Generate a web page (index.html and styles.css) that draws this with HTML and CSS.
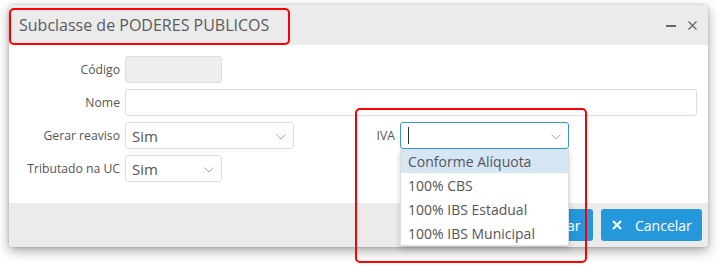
FILE: index.html
```html
<!DOCTYPE html>
<html lang="pt">
<head>
<meta charset="utf-8">
<link rel="stylesheet" href="styles.css">
</head>
<body>
<div class="dialog">
  <div class="header">
    <span class="title">Subclasse de PODERES PUBLICOS</span>
    <div class="tools">
      <span class="min"></span>
      <svg class="close" width="9" height="9" viewBox="0 0 9 9"><path d="M0.5 0.5 L8.5 8.5 M8.5 0.5 L0.5 8.5" stroke="#666" stroke-width="1.3" fill="none"/></svg>
    </div>
  </div>
  <div class="body">
    <div class="row">
      <label class="lbl">Código</label>
      <div class="input disabled w97"></div>
    </div>
    <div class="row">
      <label class="lbl">Nome</label>
      <div class="input grow"></div>
    </div>
    <div class="row">
      <label class="lbl">Gerar reaviso</label>
      <div class="select w169"><span class="val">Sim</span><svg class="chev" width="10" height="6" viewBox="0 0 10 6"><path d="M0.5 0.5 L5 5 L9.5 0.5" stroke="#aaa" stroke-width="1" fill="none"/></svg></div>
      <label class="lbl lbl-iva">IVA</label>
      <div class="combo">
        <div class="select w169 focus"><span class="caret"></span><svg class="chev" width="10" height="6" viewBox="0 0 10 6"><path d="M0.5 0.5 L5 5 L9.5 0.5" stroke="#aaa" stroke-width="1" fill="none"/></svg></div>
        <ul class="menu">
          <li class="active">Conforme Alíquota</li>
          <li>100% CBS</li>
          <li>100% IBS Estadual</li>
          <li>100% IBS Municipal</li>
        </ul>
      </div>
    </div>
    <div class="row">
      <label class="lbl">Tributado na UC</label>
      <div class="select w97"><span class="val">Sim</span><svg class="chev" width="10" height="6" viewBox="0 0 10 6"><path d="M0.5 0.5 L5 5 L9.5 0.5" stroke="#aaa" stroke-width="1" fill="none"/></svg></div>
    </div>
  </div>
  <div class="footer">
    <button class="btn btn-save"><svg width="12" height="10" viewBox="0 0 12 10"><path d="M1 5 L4.5 8.5 L11 1.5" stroke="#fff" stroke-width="2" fill="none"/></svg><span>Salvar</span></button>
    <button class="btn btn-cancel"><svg width="10" height="10" viewBox="0 0 10 10"><path d="M1 1 L9 9 M9 1 L1 9" stroke="#fff" stroke-width="2" fill="none"/></svg><span>Cancelar</span></button>
  </div>
  <div class="mark mark-title"></div>
  <div class="mark mark-iva"></div>
</div>
</body>
</html>
```

FILE: styles.css
```css
* { box-sizing: border-box; }
html, body { margin: 0; padding: 0; background: #fff; }
body {
  font-family: "Open Sans", "Noto Sans", sans-serif;
  color: #555;
  width: 720px;
  height: 275px;
  overflow: hidden;
}
.dialog {
  position: relative;
  margin: 5px 0 0 9px;
  width: 699px;
  border-radius: 4px;
  background: #fff;
  box-shadow: 0 4px 12px rgba(0,0,0,0.35), 0 0 3px rgba(0,0,0,0.2);
}
.header {
  height: 40px;
  background: #ebebeb;
  border-radius: 4px 4px 0 0;
  display: flex;
  align-items: center;
  justify-content: space-between;
  padding: 0 11px 0 10px;
}
.title {
  font-size: 16px;
  color: #5b5b5b;
}
.tools {
  display: flex;
  align-items: center;
  gap: 12px;
}
.min {
  display: block;
  width: 10px;
  height: 2px;
  background: #666;
  margin-top: 1px;
}
.close { display: block; }
.body {
  padding: 11px 0 21px 0;
  display: flex;
  flex-direction: column;
  gap: 6px;
}
.row {
  display: flex;
  align-items: center;
  height: 27px;
}
.lbl {
  width: 111px;
  flex-shrink: 0;
  text-align: right;
  font-size: 12.2px;
  color: #555;
  margin-right: 5px;
}
.lbl-iva { width: 101px; }
.input, .select {
  height: 27px;
  flex-shrink: 0;
  border: 1px solid #ddd;
  border-radius: 3px;
  background: #fff;
}
.disabled { background: #eee; }
.w97 { width: 97px; }
.w169 { width: 169px; }
.grow { width: 572px; }
.select {
  position: relative;
  display: flex;
  align-items: center;
  padding-left: 6px;
}
.val { font-size: 15px; color: #555; }
.chev { position: absolute; right: 7px; top: 11px; }
.focus { border-color: #3a93d4; }
.caret {
  display: block;
  width: 1px;
  height: 17px;
  background: #333;
  margin-left: 1px;
}
.combo { position: relative; }
.menu {
  position: absolute;
  left: 0;
  top: 27px;
  width: 169px;
  margin: 0;
  padding: 0;
  list-style: none;
  background: #fff;
  border: 1px solid #ddd;
  border-top: none;
  box-shadow: 0 3px 6px rgba(0,0,0,0.18);
  z-index: 5;
}
.menu li {
  height: 24px;
  line-height: 22px;
  padding: 2px 0 0 7px;
  font-size: 14px;
  color: #555;
}
.menu li.active { background: #d5e6f5; }
.footer {
  height: 44px;
  background: #ebebeb;
  border-radius: 0 0 4px 4px;
  display: flex;
  justify-content: flex-end;
  align-items: flex-start;
  padding: 6px 6px 0 0;
  gap: 8px;
}
.btn {
  height: 32px;
  border: none;
  border-radius: 3px;
  background: #2597db;
  color: #fff;
  font-family: "Open Sans", "Noto Sans", sans-serif;
  font-size: 14px;
  display: flex;
  align-items: center;
  gap: 13px;
  padding: 0 10px 0 11px;
}
.btn svg { display: block; flex-shrink: 0; }
.btn-save { width: 88px; }
.btn-cancel { width: 101px; }
.mark {
  position: absolute;
  border: 2px solid #f00;
  border-radius: 5px;
  pointer-events: none;
  z-index: 10;
}
.mark-title { left: 0; top: 3px; width: 281px; height: 37px; }
.mark-iva { left: 346px; top: 103px; width: 232px; height: 155px; }
```
